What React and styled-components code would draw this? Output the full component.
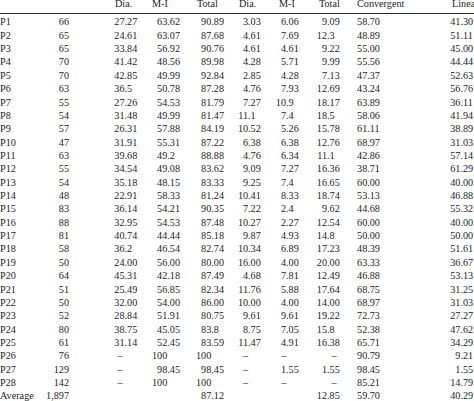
import React from "react";
import styled, { createGlobalStyle } from "styled-components";

const Global = createGlobalStyle`
  html, body { margin: 0; padding: 0; background: #fff; overflow: hidden; }
  body { width: 474px; height: 401px; }
`;

const FS = 10.2;
const LH = 13.36;

// grid tracks: label, count, then for each numeric column an integer part
// (right-aligned, ending at the decimal point) and a fraction part
const TRACKS = [
  40, 30, // label, count (count ends at 70)
  54.5, 25.5, // Dia
  17.3, 22.7, // M-I
  21.3, 24.7, // Total
  12.1, 26.9, // Dia
  11.1, 28.9, // M-I
  12.1, 22.9, // Total
  17.3, 72.7, // Convergent
  20.5, 39.5, // Linear
];

const Table = styled.div`
  width: 520px;
  font-family: "Liberation Serif", "Times New Roman", serif;
  font-size: ${FS}px;
  line-height: ${LH}px;
  color: #1c1c1c;
  margin-top: -3px;
`;

const HeadRow = styled.div`
  display: flex;
  padding-left: 115px;
  height: ${LH}px;
  padding-bottom: 2.6px;
  border-bottom: 1px solid #2a2a2a;
  white-space: nowrap;
`;

const Head = styled.div`
  width: ${(p) => p.$w}px;
  flex: none;
`;

const Body = styled.div`
  padding-top: 1.4px;
`;

const Row = styled.div`
  display: grid;
  grid-template-columns: ${TRACKS.map((t) => t + "px").join(" ")};
  height: ${LH}px;
  white-space: nowrap;
`;

const Label = styled.div`
  text-align: left;
`;

const Count = styled.div`
  text-align: right;
  padding-right: 1px;
`;

const Int = styled.div`
  text-align: right;
`;

const Frac = styled.div`
  text-align: left;
`;

const DashCell = styled.div`
  grid-column: span 2;
  padding-left: ${(p) => p.$at}px;
`;

const Empty = styled.div`
  grid-column: span 2;
`;

// offsets of the dash from the start of the int track, per numeric column
const DASH_AT = [47.5, 0, 0, 7, 6.5, 16.5, 0, 0];

const heads = [
  ["Dia.", 37],
  ["M-I", 45],
  ["Total", 42],
  ["Dia.", 40],
  ["M-I", 40],
  ["Total", 38],
  ["Convergent", 95],
  ["Linear", 60],
];

const rows = [
  ["P1", "66", "27.27", "63.62", "90.89", "3.03", "6.06", "9.09", "58.70", "41.30"],
  ["P2", "65", "24.61", "63.07", "87.68", "4.61", "7.69", "12.3", "48.89", "51.11"],
  ["P3", "65", "33.84", "56.92", "90.76", "4.61", "4.61", "9.22", "55.00", "45.00"],
  ["P4", "70", "41.42", "48.56", "89.98", "4.28", "5.71", "9.99", "55.56", "44.44"],
  ["P5", "70", "42.85", "49.99", "92.84", "2.85", "4.28", "7.13", "47.37", "52.63"],
  ["P6", "63", "36.5", "50.78", "87.28", "4.76", "7.93", "12.69", "43.24", "56.76"],
  ["P7", "55", "27.26", "54.53", "81.79", "7.27", "10.9", "18.17", "63.89", "36.11"],
  ["P8", "54", "31.48", "49.99", "81.47", "11.1", "7.4", "18.5", "58.06", "41.94"],
  ["P9", "57", "26.31", "57.88", "84.19", "10.52", "5.26", "15.78", "61.11", "38.89"],
  ["P10", "47", "31.91", "55.31", "87.22", "6.38", "6.38", "12.76", "68.97", "31.03"],
  ["P11", "63", "39.68", "49.2", "88.88", "4.76", "6.34", "11.1", "42.86", "57.14"],
  ["P12", "55", "34.54", "49.08", "83.62", "9.09", "7.27", "16.36", "38.71", "61.29"],
  ["P13", "54", "35.18", "48.15", "83.33", "9.25", "7.4", "16.65", "60.00", "40.00"],
  ["P14", "48", "22.91", "58.33", "81.24", "10.41", "8.33", "18.74", "53.13", "46.88"],
  ["P15", "83", "36.14", "54.21", "90.35", "7.22", "2.4", "9.62", "44.68", "55.32"],
  ["P16", "88", "32.95", "54.53", "87.48", "10.27", "2.27", "12.54", "60.00", "40.00"],
  ["P17", "81", "40.74", "44.44", "85.18", "9.87", "4.93", "14.8", "50.00", "50.00"],
  ["P18", "58", "36.2", "46.54", "82.74", "10.34", "6.89", "17.23", "48.39", "51.61"],
  ["P19", "50", "24.00", "56.00", "80.00", "16.00", "4.00", "20.00", "63.33", "36.67"],
  ["P20", "64", "45.31", "42.18", "87.49", "4.68", "7.81", "12.49", "46.88", "53.13"],
  ["P21", "51", "25.49", "56.85", "82.34", "11.76", "5.88", "17.64", "68.75", "31.25"],
  ["P22", "50", "32.00", "54.00", "86.00", "10.00", "4.00", "14.00", "68.97", "31.03"],
  ["P23", "52", "28.84", "51.91", "80.75", "9.61", "9.61", "19.22", "72.73", "27.27"],
  ["P24", "80", "38.75", "45.05", "83.8", "8.75", "7.05", "15.8", "52.38", "47.62"],
  ["P25", "61", "31.14", "52.45", "83.59", "11.47", "4.91", "16.38", "65.71", "34.29"],
  ["P26", "76", "–", "100", "100", "–", "–", "–", "90.79", "9.21"],
  ["P27", "129", "–", "98.45", "98.45", "–", "1.55", "1.55", "98.45", "1.55"],
  ["P28", "142", "–", "100", "100", "–", "–", "–", "85.21", "14.79"],
  ["Average", "1,897", "", "", "87.12", "", "", "12.85", "59.70", "40.29"],
];

function NumCell({ value, col }) {
  if (value === "") return <Empty />;
  if (value === "–") return <DashCell $at={DASH_AT[col]}>–</DashCell>;
  const i = value.indexOf(".");
  const int = i < 0 ? value : value.slice(0, i);
  const frac = i < 0 ? "" : value.slice(i);
  return (
    <>
      <Int>{int}</Int>
      <Frac>{frac}</Frac>
    </>
  );
}

export default function App() {
  return (
    <>
      <Global />
      <Table>
        <HeadRow>
          {heads.map(([t, w], k) => (
            <Head key={k} $w={w}>
              {t}
            </Head>
          ))}
        </HeadRow>
        <Body>
          {rows.map((r) => (
            <Row key={r[0]}>
              <Label>{r[0]}</Label>
              <Count>{r[1]}</Count>
              {r.slice(2).map((v, c) => (
                <NumCell key={c} value={v} col={c} />
              ))}
            </Row>
          ))}
        </Body>
      </Table>
    </>
  );
}
